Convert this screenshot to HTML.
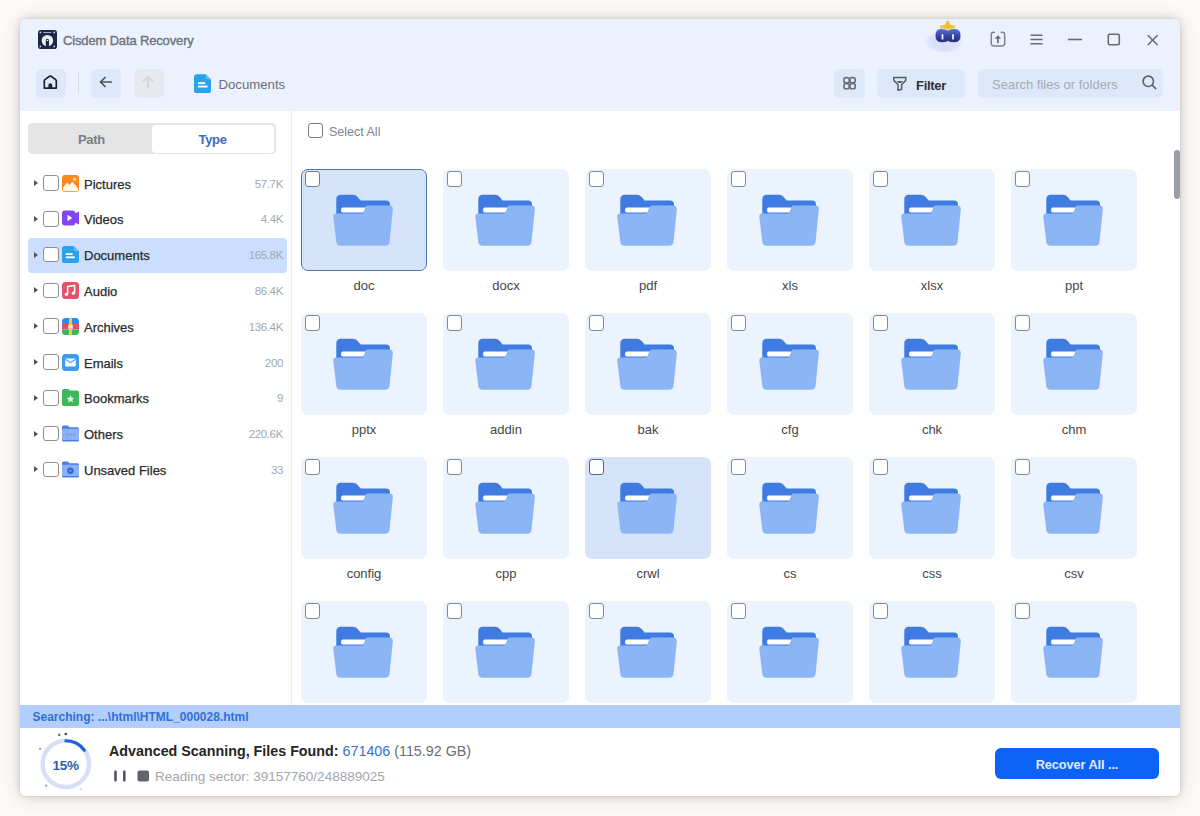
<!DOCTYPE html>
<html><head><meta charset="utf-8">
<style>
*{box-sizing:border-box;margin:0;padding:0}
html,body{width:1200px;height:816px;overflow:hidden;background:#fdfaf8;font-family:"Liberation Sans",sans-serif}
.abs{position:absolute}
.win{position:absolute;left:20px;top:19px;width:1160px;height:777px;border-radius:5px;background:#fff;
  box-shadow:0 0 2px rgba(0,0,0,0.16),0 0 8px rgba(40,30,25,0.12),0 1px 20px rgba(40,30,25,0.16);overflow:hidden}
.hdr{position:absolute;left:20px;top:19px;width:1160px;height:92px;background:#ebf2fe;border-radius:5px 5px 0 0}
.title{position:absolute;left:63px;top:32.8px;font-size:13px;color:#6b717b;-webkit-text-stroke:0.35px #6b717b;letter-spacing:-0.15px;white-space:nowrap}
.tbtn{position:absolute;top:68.5px;width:30px;height:29px;border-radius:5px;background:#dde8fb}
.divl{position:absolute;left:291px;top:111px;width:1px;height:594px;background:#ececec}
.tabs{position:absolute;left:28px;top:123px;width:248px;height:31px;border-radius:4.5px;background:#e5e5e5}
.tabw{position:absolute;left:152px;top:124.5px;width:122px;height:28px;border-radius:4px;background:#fff}
.tabt{position:absolute;top:132px;font-size:13px;letter-spacing:-0.3px;font-weight:bold;white-space:nowrap}
.srow{position:absolute;left:28px;width:259px;height:35px;border-radius:4px}
.srow.sel{background:#cbdefd}
.tri{position:absolute;left:5.7px;top:13.6px;width:0;height:0;border-left:4.5px solid #555;border-top:3px solid transparent;border-bottom:3px solid transparent}
.scb{position:absolute;left:15.3px;top:8.7px;width:15.6px;height:15.6px;border:1.5px solid #8e8e8e;border-radius:3px;background:#fff}
.sic{position:absolute;left:34px;top:8.2px;width:17px;height:17px}
.sic svg{display:block}
.sname{position:absolute;left:56px;top:10px;font-size:13px;color:#2a2a2a;-webkit-text-stroke:0.25px #2a2a2a;white-space:nowrap}
.scnt{position:absolute;right:4px;top:11px;font-size:11.5px;letter-spacing:-0.35px;color:#a3a8b0;white-space:nowrap}
.selall{position:absolute;left:308px;top:123px;width:15px;height:15px;border:1.5px solid #7c7c7c;border-radius:3px}
.selallt{position:absolute;left:329px;top:125px;font-size:12.5px;color:#7f838b;white-space:nowrap}
.card{position:absolute;width:126px;height:102px;border-radius:7px;background:#ebf3fe}
.card.sel{background:#d5e4fb;border:1px solid #4d78b6}
.card.hov{background:#d5e4fb}
.card .cb{position:absolute;left:3.5px;top:2.2px;width:15.7px;height:15.7px;border:1.5px solid #85888e;border-radius:3px;background:#fff}
.card.sel .cb{left:2.5px;top:1.2px;border-color:#6f7f98}
.card.hov .cb{border-color:#55688a}
.card .fi{position:absolute;left:32px;top:25px}
.card.sel .fi{left:31px;top:24px}
.lab{position:absolute;width:126px;text-align:center;font-size:13px;color:#454545;padding-top:1px;white-space:nowrap}
.sbar{position:absolute;left:20px;top:705px;width:1160px;height:23px;background:#b2cefc}
.sbart{position:absolute;left:32.5px;top:709.8px;font-size:12px;font-weight:bold;color:#3171d6;white-space:nowrap}
.scroll{position:absolute;left:1174px;top:150px;width:6px;height:49px;border-radius:3px;background:#9a9ea6}
.btn{position:absolute;left:995px;top:748px;width:164px;height:31px;border-radius:6px;background:#0a63f5;color:#e3ecff;font-size:12.8px;letter-spacing:-0.1px;font-weight:bold;text-align:center;line-height:33px}
.info1{position:absolute;left:109px;top:742.5px;font-size:14.3px;font-weight:bold;color:#252525;white-space:nowrap}
.info2{position:absolute;left:155px;top:768.5px;font-size:13.5px;color:#a2a6ad;white-space:nowrap}
</style></head><body>
<div class="win"></div>
<div class="hdr"></div>

<!-- logo -->
<svg class="abs" style="left:38px;top:30px" width="19" height="19" viewBox="0 0 19 19">
<rect x="0" y="0" width="19" height="19" rx="2.8" fill="#1e2846"/>
<circle cx="2.4" cy="2.5" r="0.9" fill="#c8cfdf"/><circle cx="16.2" cy="2.5" r="0.9" fill="#c8cfdf"/>
<circle cx="2.4" cy="16.4" r="0.9" fill="#c8cfdf"/><circle cx="16.2" cy="16.4" r="0.9" fill="#c8cfdf"/>
<rect x="5.3" y="2" width="8" height="0.9" fill="#b9c1d4"/>
<circle cx="9.4" cy="10.6" r="5.7" fill="#e9edf4"/>
<path d="M7.8 19V10.4A1.6 1.6 0 0 1 11 10.4V19Z" fill="#1e2846"/>
<circle cx="9.4" cy="10.5" r="0.75" fill="#eef1f6"/>
</svg>
<div class="title">Cisdem Data Recovery</div>

<!-- title bar right -->
<svg class="abs" style="left:924px;top:19px" width="48" height="36" viewBox="0 0 48 36">
<defs><radialGradient id="gl" cx="0.45" cy="0.55" r="0.5"><stop offset="0" stop-color="#d3dbfa"/><stop offset="0.7" stop-color="#dde3fb"/><stop offset="1" stop-color="#eef3fd"/></radialGradient>
<linearGradient id="bd" x1="0" y1="0" x2="0" y2="1"><stop offset="0" stop-color="#6076d4"/><stop offset="0.45" stop-color="#3c4aa8"/><stop offset="1" stop-color="#242a78"/></linearGradient></defs>
<ellipse cx="22" cy="22" rx="21" ry="12" fill="url(#gl)"/>
<path d="M23.6 2.6L25.6 6.8L30.2 7.6L26.9 10.9L27.7 15.5L23.6 13.3L19.5 15.5L20.3 10.9L17 7.6L21.6 6.8Z" fill="#f6c030" stroke="#f6c030" stroke-width="2.2" stroke-linejoin="round"/>
<path d="M11 16.5Q11 9.5 17.5 9.5Q21 9.5 23.8 11.2Q26.6 9.5 30.2 9.5Q37 9.5 37 16.5Q37 23.8 30 23.8Q26.5 23.8 23.8 22.5Q21.1 23.8 18 23.8Q11 23.8 11 16.5Z" fill="url(#bd)" stroke="#f3f5ff" stroke-width="0.8"/>
<rect x="17.6" y="15" width="1.8" height="5.6" rx="0.9" fill="#f3f4ff"/>
<rect x="28.1" y="15" width="1.8" height="5.6" rx="0.9" fill="#f3f4ff"/>
<path d="M17 30.5H30" stroke="#cfd6ee" stroke-width="1.2" stroke-dasharray="1.5 1"/>
</svg>
<svg class="abs" style="left:990px;top:31px" width="16" height="16" viewBox="0 0 16 16">
<path d="M4.4 1.3H3.6Q1.3 1.3 1.3 3.6V12.6Q1.3 14.9 3.6 14.9H12.4Q14.7 14.9 14.7 12.6V3.6Q14.7 1.3 12.4 1.3H11.2" stroke="#7e838b" stroke-width="1.5" fill="none" stroke-linecap="round"/>
<path d="M7.9 11.4V6.2" stroke="#686d75" stroke-width="1.7" stroke-linecap="round"/>
<path d="M5.4 7.3L7.9 4.7L10.4 7.3Z" fill="#686d75" stroke="#686d75" stroke-width="0.8" stroke-linejoin="round"/>
</svg>
<svg class="abs" style="left:1030px;top:34px" width="13" height="11" viewBox="0 0 13 11">
<path d="M0.5 1.2H12.5M0.5 5.5H12.5M0.5 9.8H12.5" stroke="#676b72" stroke-width="1.6"/>
</svg>
<svg class="abs" style="left:1068px;top:38px" width="15" height="3" viewBox="0 0 15 3">
<path d="M0 1.5H14" stroke="#676b72" stroke-width="1.6"/>
</svg>
<svg class="abs" style="left:1107px;top:33px" width="14" height="13" viewBox="0 0 14 13">
<rect x="1.3" y="1.3" width="11" height="10.5" rx="1.5" stroke="#676b72" stroke-width="1.6" fill="none"/>
</svg>
<svg class="abs" style="left:1146px;top:34px" width="13" height="12" viewBox="0 0 13 12">
<path d="M1.8 1.2L11.6 11M11.6 1.2L1.8 11" stroke="#676b72" stroke-width="1.6"/>
</svg>

<!-- toolbar -->
<div class="tbtn" style="left:36px"></div>
<svg class="abs" style="left:42px;top:74px" width="16" height="16" viewBox="0 0 16 16">
<path d="M2.3 14.1V6.7Q2.3 6 2.9 5.6L7.5 2.3Q8.3 1.7 9.1 2.3L13.7 5.6Q14.3 6 14.3 6.7V14.1Z" stroke="#1f2329" stroke-width="1.7" fill="none" stroke-linejoin="round"/>
<path d="M6.4 14.5V11.2Q6.4 9.3 8.3 9.3Q10.2 9.3 10.2 11.2V14.5Z" fill="#1f2329"/>
</svg>
<div class="abs" style="left:78px;top:72px;width:1px;height:22px;background:#d8dde6"></div>
<div class="tbtn" style="left:91px"></div>
<svg class="abs" style="left:98px;top:74px" width="16" height="16" viewBox="0 0 16 16">
<path d="M14 8H2.5M7.5 3L2.5 8L7.5 13" stroke="#4e535a" stroke-width="1.6" fill="none"/>
</svg>
<div class="tbtn" style="left:134px;background:#e6e9ef"></div>
<svg class="abs" style="left:140px;top:74px" width="16" height="16" viewBox="0 0 16 16">
<path d="M8 14V2.5M3 7.5L8 2.5L13 7.5" stroke="#cfd3da" stroke-width="1.5" fill="none"/>
</svg>
<svg class="abs" style="left:193.5px;top:73.5px" width="17" height="19" viewBox="0 0 17 19">
<path d="M0 2.8Q0 0.2 2.6 0.2H11.8L17 5.4V16.4Q17 19 14.4 19H2.6Q0 19 0 16.4Z" fill="#2ba2ee"/>
<path d="M11.8 0.2L17 5.4H14Q11.8 5.4 11.8 3.2Z" fill="#62bdf5"/>
<rect x="4" y="8.2" width="7.2" height="1.9" fill="#fff"/>
<rect x="4" y="11.6" width="9.5" height="1.9" fill="#fff"/>
</svg>
<div class="abs" style="left:218.5px;top:77px;font-size:13.2px;color:#6a6f77;white-space:nowrap">Documents</div>

<div class="tbtn" style="left:834px;width:31px"></div>
<svg class="abs" style="left:842px;top:75.5px" width="15" height="15" viewBox="0 0 15 15">
<rect x="2" y="1.6" width="5.2" height="5.2" rx="1.9" stroke="#6a6f77" stroke-width="1.6" fill="none"/>
<rect x="8" y="1.6" width="5.2" height="5.2" rx="1.9" stroke="#6a6f77" stroke-width="1.6" fill="none"/>
<rect x="2" y="7.6" width="5.2" height="5.2" rx="1.9" stroke="#6a6f77" stroke-width="1.6" fill="none"/>
<rect x="8" y="7.6" width="5.2" height="5.2" rx="1.9" stroke="#6a6f77" stroke-width="1.6" fill="none"/>
</svg>
<div class="tbtn" style="left:877px;width:88px"></div>
<svg class="abs" style="left:892px;top:76px" width="16" height="15" viewBox="0 0 16 15">
<path d="M1.8 1.6H13.8V3.4Q13.8 4.6 12.9 5.4L9.6 8.5V13.2L6 14.3V8.5L2.7 5.4Q1.8 4.6 1.8 3.4Z" stroke="#565b63" stroke-width="1.5" fill="none" stroke-linejoin="round"/>
<path d="M4.6 5H11L9 6.9H6.6Z" fill="#565b63"/>
</svg>
<div class="abs" style="left:916px;top:77.5px;font-size:13px;letter-spacing:-0.3px;font-weight:bold;color:#2c3037;white-space:nowrap">Filter</div>
<div class="tbtn" style="left:978px;width:185px"></div>
<div class="abs" style="left:992px;top:77px;font-size:13px;color:#a5aab2;white-space:nowrap">Search files or folders</div>
<svg class="abs" style="left:1142px;top:75px" width="15" height="15" viewBox="0 0 15 15">
<circle cx="6.3" cy="6.3" r="5.2" stroke="#5d626a" stroke-width="1.6" fill="none"/>
<path d="M10.2 10.2L14 14" stroke="#5d626a" stroke-width="1.7"/>
</svg>

<!-- left panel -->
<div class="divl"></div>
<div class="tabs"></div><div class="tabw"></div>
<div class="tabt" style="left:78px;color:#7b7f86">Path</div>
<div class="tabt" style="left:198.5px;color:#4169c0">Type</div>
<div class="srow" style="top:166.5px"><div class="tri"></div><div class="scb"></div><div class="sic"><svg width="17" height="17" viewBox="0 0 17 17"><rect x="0" y="0" width="17" height="17" rx="3" fill="#f8891b"/><circle cx="12.6" cy="4.2" r="1.6" fill="#ffd9a8"/><path d="M1 16.2V12.6L5.2 7.4L7.6 10L10.3 6.6L16 13.2V16.2Z" fill="#fff6e8"/></svg></div><div class="sname">Pictures</div><div class="scnt">57.7K</div></div><div class="srow" style="top:202.3px"><div class="tri"></div><div class="scb"></div><div class="sic"><svg width="17" height="16" viewBox="0 0 17 16"><path d="M0 3.5Q0 0.5 3 0.5H10.5Q13.2 0.5 13.4 3.2L17 1.5V14.5L13.4 12.8Q13.2 15.5 10.5 15.5H3Q0 15.5 0 12.5Z" fill="#8245f3"/><path d="M5.5 4.8L10.3 8L5.5 11.2Z" fill="#fff"/></svg></div><div class="sname">Videos</div><div class="scnt">4.4K</div></div><div class="srow sel" style="top:238.1px"><div class="tri"></div><div class="scb"></div><div class="sic"><svg width="17" height="17" viewBox="0 0 17 17"><path d="M0 2.6Q0 0 2.6 0H11.6L17 5.2V14.4Q17 17 14.4 17H2.6Q0 17 0 14.4Z" fill="#2ba2ee"/><path d="M11.6 0L17 5.2H14Q11.6 5.2 11.6 2.8Z" fill="#62bdf5"/><rect x="3.8" y="7.2" width="6.8" height="1.8" fill="#fff"/><rect x="3.8" y="10.4" width="9" height="1.8" fill="#fff"/></svg></div><div class="sname">Documents</div><div class="scnt">165.8K</div></div><div class="srow" style="top:273.9px"><div class="tri"></div><div class="scb"></div><div class="sic"><svg width="17" height="17" viewBox="0 0 17 17"><rect width="17" height="17" rx="3.5" fill="#e9506b"/><path d="M5.6 12.2V4.6L12.6 3.4V11" stroke="#fff" stroke-width="1.5" fill="none"/><circle cx="4.4" cy="12.3" r="1.6" fill="#fff"/><circle cx="11.4" cy="11.2" r="1.6" fill="#fff"/></svg></div><div class="sname">Audio</div><div class="scnt">86.4K</div></div><div class="srow" style="top:309.7px"><div class="tri"></div><div class="scb"></div><div class="sic"><svg width="17" height="17" viewBox="0 0 17 17"><defs><clipPath id="ca"><rect width="17" height="17" rx="3.5"/></clipPath></defs><g clip-path="url(#ca)"><rect width="17" height="6" fill="#2b8cf0"/><rect y="6" width="17" height="5.5" fill="#e84c6d"/><rect y="11.5" width="17" height="5.5" fill="#3ab85c"/><rect x="7" width="3" height="17" fill="#f4c94a"/><rect x="6.2" y="6.8" width="4.6" height="4" fill="#fde9b0"/></g></svg></div><div class="sname">Archives</div><div class="scnt">136.4K</div></div><div class="srow" style="top:345.5px"><div class="tri"></div><div class="scb"></div><div class="sic"><svg width="17" height="17" viewBox="0 0 17 17"><rect width="17" height="17" rx="3.5" fill="#3a9df0"/><rect x="3.2" y="4.6" width="10.6" height="8" rx="1" fill="#fff"/><path d="M3.4 5.2L8.5 8.6L13.6 5.2" stroke="#3a9df0" stroke-width="1.1" fill="none"/></svg></div><div class="sname">Emails</div><div class="scnt">200</div></div><div class="srow" style="top:381.3px"><div class="tri"></div><div class="scb"></div><div class="sic"><svg width="17" height="17" viewBox="0 0 17 17"><path d="M0 2Q0 0 2 0H6.2L8 1.6H15Q17 1.6 17 3.6V15Q17 17 15 17H2Q0 17 0 15Z" fill="#3db95b"/><path d="M8.5 6.2L9.7 8.7L12.3 9L10.3 10.8L10.9 13.5L8.5 12.1L6.1 13.5L6.7 10.8L4.7 9L7.3 8.7Z" fill="#e8f8ea"/></svg></div><div class="sname">Bookmarks</div><div class="scnt">9</div></div><div class="srow" style="top:417.1px"><div class="tri"></div><div class="scb"></div><div class="sic"><svg width="17" height="17" viewBox="0 0 17 17"><path d="M0 2Q0 0.5 1.6 0.5H5.8L7.6 2.2H15.4Q17 2.2 17 3.8V15Q17 16.6 15.4 16.6H1.6Q0 16.6 0 15Z" fill="#4a7fe3"/><rect x="0" y="3.8" width="17" height="11.2" rx="1" fill="#8bb0f4"/><circle cx="5" cy="9.6" r="0.9" fill="#5a8be6"/><circle cx="8.5" cy="9.6" r="0.9" fill="#5a8be6"/><circle cx="12" cy="9.6" r="0.9" fill="#5a8be6"/></svg></div><div class="sname">Others</div><div class="scnt">220.6K</div></div><div class="srow" style="top:452.9px"><div class="tri"></div><div class="scb"></div><div class="sic"><svg width="17" height="17" viewBox="0 0 17 17"><path d="M0 2Q0 0.5 1.6 0.5H5.8L7.6 2.2H15.4Q17 2.2 17 3.8V15Q17 16.6 15.4 16.6H1.6Q0 16.6 0 15Z" fill="#4a7fe3"/><rect x="0" y="3.8" width="17" height="11.2" rx="1" fill="#8bb0f4"/><circle cx="8.4" cy="9.8" r="3.3" fill="#2d6be0"/><circle cx="8.4" cy="9.8" r="1" fill="#7aa6f2"/></svg></div><div class="sname">Unsaved Files</div><div class="scnt">33</div></div>

<!-- content -->
<div class="selall"></div><div class="selallt">Select All</div>
<div class="card sel" style="left:301px;top:169px"><div class="cb"></div><svg class="fi" width="62" height="54" viewBox="0 0 62 54"><path d="M3.3 5.3Q3.3 0.7 8 0.7H20Q22.6 0.7 24.2 2.6L27.6 6.6H53Q57 6.6 57 10.5V30H3.3Z" fill="#3f7be1"/><path d="M9.5 13.6H33Q33.5 13.6 33 14.5L31.2 18.6H9.5Q8 18.6 8 16.1Q8 13.6 9.5 13.6Z" fill="#ffffff"/><path d="M0.3 22.7Q0.1 19.4 3.3 19.4H29.8L32.6 13Q33.1 11.6 34.8 11.6H56.3Q60.1 11.6 59.8 15.4L56.6 47.6Q56.2 51.8 52.3 51.8H7.6Q3.6 51.8 3.3 47.8Z" fill="#8cb5f5"/></svg></div><div class="lab" style="left:301px;top:277px">doc</div><div class="card " style="left:443px;top:169px"><div class="cb"></div><svg class="fi" width="62" height="54" viewBox="0 0 62 54"><path d="M3.3 5.3Q3.3 0.7 8 0.7H20Q22.6 0.7 24.2 2.6L27.6 6.6H53Q57 6.6 57 10.5V30H3.3Z" fill="#3f7be1"/><path d="M9.5 13.6H33Q33.5 13.6 33 14.5L31.2 18.6H9.5Q8 18.6 8 16.1Q8 13.6 9.5 13.6Z" fill="#ffffff"/><path d="M0.3 22.7Q0.1 19.4 3.3 19.4H29.8L32.6 13Q33.1 11.6 34.8 11.6H56.3Q60.1 11.6 59.8 15.4L56.6 47.6Q56.2 51.8 52.3 51.8H7.6Q3.6 51.8 3.3 47.8Z" fill="#8cb5f5"/></svg></div><div class="lab" style="left:443px;top:277px">docx</div><div class="card " style="left:585px;top:169px"><div class="cb"></div><svg class="fi" width="62" height="54" viewBox="0 0 62 54"><path d="M3.3 5.3Q3.3 0.7 8 0.7H20Q22.6 0.7 24.2 2.6L27.6 6.6H53Q57 6.6 57 10.5V30H3.3Z" fill="#3f7be1"/><path d="M9.5 13.6H33Q33.5 13.6 33 14.5L31.2 18.6H9.5Q8 18.6 8 16.1Q8 13.6 9.5 13.6Z" fill="#ffffff"/><path d="M0.3 22.7Q0.1 19.4 3.3 19.4H29.8L32.6 13Q33.1 11.6 34.8 11.6H56.3Q60.1 11.6 59.8 15.4L56.6 47.6Q56.2 51.8 52.3 51.8H7.6Q3.6 51.8 3.3 47.8Z" fill="#8cb5f5"/></svg></div><div class="lab" style="left:585px;top:277px">pdf</div><div class="card " style="left:727px;top:169px"><div class="cb"></div><svg class="fi" width="62" height="54" viewBox="0 0 62 54"><path d="M3.3 5.3Q3.3 0.7 8 0.7H20Q22.6 0.7 24.2 2.6L27.6 6.6H53Q57 6.6 57 10.5V30H3.3Z" fill="#3f7be1"/><path d="M9.5 13.6H33Q33.5 13.6 33 14.5L31.2 18.6H9.5Q8 18.6 8 16.1Q8 13.6 9.5 13.6Z" fill="#ffffff"/><path d="M0.3 22.7Q0.1 19.4 3.3 19.4H29.8L32.6 13Q33.1 11.6 34.8 11.6H56.3Q60.1 11.6 59.8 15.4L56.6 47.6Q56.2 51.8 52.3 51.8H7.6Q3.6 51.8 3.3 47.8Z" fill="#8cb5f5"/></svg></div><div class="lab" style="left:727px;top:277px">xls</div><div class="card " style="left:869px;top:169px"><div class="cb"></div><svg class="fi" width="62" height="54" viewBox="0 0 62 54"><path d="M3.3 5.3Q3.3 0.7 8 0.7H20Q22.6 0.7 24.2 2.6L27.6 6.6H53Q57 6.6 57 10.5V30H3.3Z" fill="#3f7be1"/><path d="M9.5 13.6H33Q33.5 13.6 33 14.5L31.2 18.6H9.5Q8 18.6 8 16.1Q8 13.6 9.5 13.6Z" fill="#ffffff"/><path d="M0.3 22.7Q0.1 19.4 3.3 19.4H29.8L32.6 13Q33.1 11.6 34.8 11.6H56.3Q60.1 11.6 59.8 15.4L56.6 47.6Q56.2 51.8 52.3 51.8H7.6Q3.6 51.8 3.3 47.8Z" fill="#8cb5f5"/></svg></div><div class="lab" style="left:869px;top:277px">xlsx</div><div class="card " style="left:1011px;top:169px"><div class="cb"></div><svg class="fi" width="62" height="54" viewBox="0 0 62 54"><path d="M3.3 5.3Q3.3 0.7 8 0.7H20Q22.6 0.7 24.2 2.6L27.6 6.6H53Q57 6.6 57 10.5V30H3.3Z" fill="#3f7be1"/><path d="M9.5 13.6H33Q33.5 13.6 33 14.5L31.2 18.6H9.5Q8 18.6 8 16.1Q8 13.6 9.5 13.6Z" fill="#ffffff"/><path d="M0.3 22.7Q0.1 19.4 3.3 19.4H29.8L32.6 13Q33.1 11.6 34.8 11.6H56.3Q60.1 11.6 59.8 15.4L56.6 47.6Q56.2 51.8 52.3 51.8H7.6Q3.6 51.8 3.3 47.8Z" fill="#8cb5f5"/></svg></div><div class="lab" style="left:1011px;top:277px">ppt</div><div class="card " style="left:301px;top:313px"><div class="cb"></div><svg class="fi" width="62" height="54" viewBox="0 0 62 54"><path d="M3.3 5.3Q3.3 0.7 8 0.7H20Q22.6 0.7 24.2 2.6L27.6 6.6H53Q57 6.6 57 10.5V30H3.3Z" fill="#3f7be1"/><path d="M9.5 13.6H33Q33.5 13.6 33 14.5L31.2 18.6H9.5Q8 18.6 8 16.1Q8 13.6 9.5 13.6Z" fill="#ffffff"/><path d="M0.3 22.7Q0.1 19.4 3.3 19.4H29.8L32.6 13Q33.1 11.6 34.8 11.6H56.3Q60.1 11.6 59.8 15.4L56.6 47.6Q56.2 51.8 52.3 51.8H7.6Q3.6 51.8 3.3 47.8Z" fill="#8cb5f5"/></svg></div><div class="lab" style="left:301px;top:421px">pptx</div><div class="card " style="left:443px;top:313px"><div class="cb"></div><svg class="fi" width="62" height="54" viewBox="0 0 62 54"><path d="M3.3 5.3Q3.3 0.7 8 0.7H20Q22.6 0.7 24.2 2.6L27.6 6.6H53Q57 6.6 57 10.5V30H3.3Z" fill="#3f7be1"/><path d="M9.5 13.6H33Q33.5 13.6 33 14.5L31.2 18.6H9.5Q8 18.6 8 16.1Q8 13.6 9.5 13.6Z" fill="#ffffff"/><path d="M0.3 22.7Q0.1 19.4 3.3 19.4H29.8L32.6 13Q33.1 11.6 34.8 11.6H56.3Q60.1 11.6 59.8 15.4L56.6 47.6Q56.2 51.8 52.3 51.8H7.6Q3.6 51.8 3.3 47.8Z" fill="#8cb5f5"/></svg></div><div class="lab" style="left:443px;top:421px">addin</div><div class="card " style="left:585px;top:313px"><div class="cb"></div><svg class="fi" width="62" height="54" viewBox="0 0 62 54"><path d="M3.3 5.3Q3.3 0.7 8 0.7H20Q22.6 0.7 24.2 2.6L27.6 6.6H53Q57 6.6 57 10.5V30H3.3Z" fill="#3f7be1"/><path d="M9.5 13.6H33Q33.5 13.6 33 14.5L31.2 18.6H9.5Q8 18.6 8 16.1Q8 13.6 9.5 13.6Z" fill="#ffffff"/><path d="M0.3 22.7Q0.1 19.4 3.3 19.4H29.8L32.6 13Q33.1 11.6 34.8 11.6H56.3Q60.1 11.6 59.8 15.4L56.6 47.6Q56.2 51.8 52.3 51.8H7.6Q3.6 51.8 3.3 47.8Z" fill="#8cb5f5"/></svg></div><div class="lab" style="left:585px;top:421px">bak</div><div class="card " style="left:727px;top:313px"><div class="cb"></div><svg class="fi" width="62" height="54" viewBox="0 0 62 54"><path d="M3.3 5.3Q3.3 0.7 8 0.7H20Q22.6 0.7 24.2 2.6L27.6 6.6H53Q57 6.6 57 10.5V30H3.3Z" fill="#3f7be1"/><path d="M9.5 13.6H33Q33.5 13.6 33 14.5L31.2 18.6H9.5Q8 18.6 8 16.1Q8 13.6 9.5 13.6Z" fill="#ffffff"/><path d="M0.3 22.7Q0.1 19.4 3.3 19.4H29.8L32.6 13Q33.1 11.6 34.8 11.6H56.3Q60.1 11.6 59.8 15.4L56.6 47.6Q56.2 51.8 52.3 51.8H7.6Q3.6 51.8 3.3 47.8Z" fill="#8cb5f5"/></svg></div><div class="lab" style="left:727px;top:421px">cfg</div><div class="card " style="left:869px;top:313px"><div class="cb"></div><svg class="fi" width="62" height="54" viewBox="0 0 62 54"><path d="M3.3 5.3Q3.3 0.7 8 0.7H20Q22.6 0.7 24.2 2.6L27.6 6.6H53Q57 6.6 57 10.5V30H3.3Z" fill="#3f7be1"/><path d="M9.5 13.6H33Q33.5 13.6 33 14.5L31.2 18.6H9.5Q8 18.6 8 16.1Q8 13.6 9.5 13.6Z" fill="#ffffff"/><path d="M0.3 22.7Q0.1 19.4 3.3 19.4H29.8L32.6 13Q33.1 11.6 34.8 11.6H56.3Q60.1 11.6 59.8 15.4L56.6 47.6Q56.2 51.8 52.3 51.8H7.6Q3.6 51.8 3.3 47.8Z" fill="#8cb5f5"/></svg></div><div class="lab" style="left:869px;top:421px">chk</div><div class="card " style="left:1011px;top:313px"><div class="cb"></div><svg class="fi" width="62" height="54" viewBox="0 0 62 54"><path d="M3.3 5.3Q3.3 0.7 8 0.7H20Q22.6 0.7 24.2 2.6L27.6 6.6H53Q57 6.6 57 10.5V30H3.3Z" fill="#3f7be1"/><path d="M9.5 13.6H33Q33.5 13.6 33 14.5L31.2 18.6H9.5Q8 18.6 8 16.1Q8 13.6 9.5 13.6Z" fill="#ffffff"/><path d="M0.3 22.7Q0.1 19.4 3.3 19.4H29.8L32.6 13Q33.1 11.6 34.8 11.6H56.3Q60.1 11.6 59.8 15.4L56.6 47.6Q56.2 51.8 52.3 51.8H7.6Q3.6 51.8 3.3 47.8Z" fill="#8cb5f5"/></svg></div><div class="lab" style="left:1011px;top:421px">chm</div><div class="card " style="left:301px;top:457px"><div class="cb"></div><svg class="fi" width="62" height="54" viewBox="0 0 62 54"><path d="M3.3 5.3Q3.3 0.7 8 0.7H20Q22.6 0.7 24.2 2.6L27.6 6.6H53Q57 6.6 57 10.5V30H3.3Z" fill="#3f7be1"/><path d="M9.5 13.6H33Q33.5 13.6 33 14.5L31.2 18.6H9.5Q8 18.6 8 16.1Q8 13.6 9.5 13.6Z" fill="#ffffff"/><path d="M0.3 22.7Q0.1 19.4 3.3 19.4H29.8L32.6 13Q33.1 11.6 34.8 11.6H56.3Q60.1 11.6 59.8 15.4L56.6 47.6Q56.2 51.8 52.3 51.8H7.6Q3.6 51.8 3.3 47.8Z" fill="#8cb5f5"/></svg></div><div class="lab" style="left:301px;top:565px">config</div><div class="card " style="left:443px;top:457px"><div class="cb"></div><svg class="fi" width="62" height="54" viewBox="0 0 62 54"><path d="M3.3 5.3Q3.3 0.7 8 0.7H20Q22.6 0.7 24.2 2.6L27.6 6.6H53Q57 6.6 57 10.5V30H3.3Z" fill="#3f7be1"/><path d="M9.5 13.6H33Q33.5 13.6 33 14.5L31.2 18.6H9.5Q8 18.6 8 16.1Q8 13.6 9.5 13.6Z" fill="#ffffff"/><path d="M0.3 22.7Q0.1 19.4 3.3 19.4H29.8L32.6 13Q33.1 11.6 34.8 11.6H56.3Q60.1 11.6 59.8 15.4L56.6 47.6Q56.2 51.8 52.3 51.8H7.6Q3.6 51.8 3.3 47.8Z" fill="#8cb5f5"/></svg></div><div class="lab" style="left:443px;top:565px">cpp</div><div class="card hov" style="left:585px;top:457px"><div class="cb"></div><svg class="fi" width="62" height="54" viewBox="0 0 62 54"><path d="M3.3 5.3Q3.3 0.7 8 0.7H20Q22.6 0.7 24.2 2.6L27.6 6.6H53Q57 6.6 57 10.5V30H3.3Z" fill="#3f7be1"/><path d="M9.5 13.6H33Q33.5 13.6 33 14.5L31.2 18.6H9.5Q8 18.6 8 16.1Q8 13.6 9.5 13.6Z" fill="#ffffff"/><path d="M0.3 22.7Q0.1 19.4 3.3 19.4H29.8L32.6 13Q33.1 11.6 34.8 11.6H56.3Q60.1 11.6 59.8 15.4L56.6 47.6Q56.2 51.8 52.3 51.8H7.6Q3.6 51.8 3.3 47.8Z" fill="#8cb5f5"/></svg></div><div class="lab" style="left:585px;top:565px">crwl</div><div class="card " style="left:727px;top:457px"><div class="cb"></div><svg class="fi" width="62" height="54" viewBox="0 0 62 54"><path d="M3.3 5.3Q3.3 0.7 8 0.7H20Q22.6 0.7 24.2 2.6L27.6 6.6H53Q57 6.6 57 10.5V30H3.3Z" fill="#3f7be1"/><path d="M9.5 13.6H33Q33.5 13.6 33 14.5L31.2 18.6H9.5Q8 18.6 8 16.1Q8 13.6 9.5 13.6Z" fill="#ffffff"/><path d="M0.3 22.7Q0.1 19.4 3.3 19.4H29.8L32.6 13Q33.1 11.6 34.8 11.6H56.3Q60.1 11.6 59.8 15.4L56.6 47.6Q56.2 51.8 52.3 51.8H7.6Q3.6 51.8 3.3 47.8Z" fill="#8cb5f5"/></svg></div><div class="lab" style="left:727px;top:565px">cs</div><div class="card " style="left:869px;top:457px"><div class="cb"></div><svg class="fi" width="62" height="54" viewBox="0 0 62 54"><path d="M3.3 5.3Q3.3 0.7 8 0.7H20Q22.6 0.7 24.2 2.6L27.6 6.6H53Q57 6.6 57 10.5V30H3.3Z" fill="#3f7be1"/><path d="M9.5 13.6H33Q33.5 13.6 33 14.5L31.2 18.6H9.5Q8 18.6 8 16.1Q8 13.6 9.5 13.6Z" fill="#ffffff"/><path d="M0.3 22.7Q0.1 19.4 3.3 19.4H29.8L32.6 13Q33.1 11.6 34.8 11.6H56.3Q60.1 11.6 59.8 15.4L56.6 47.6Q56.2 51.8 52.3 51.8H7.6Q3.6 51.8 3.3 47.8Z" fill="#8cb5f5"/></svg></div><div class="lab" style="left:869px;top:565px">css</div><div class="card " style="left:1011px;top:457px"><div class="cb"></div><svg class="fi" width="62" height="54" viewBox="0 0 62 54"><path d="M3.3 5.3Q3.3 0.7 8 0.7H20Q22.6 0.7 24.2 2.6L27.6 6.6H53Q57 6.6 57 10.5V30H3.3Z" fill="#3f7be1"/><path d="M9.5 13.6H33Q33.5 13.6 33 14.5L31.2 18.6H9.5Q8 18.6 8 16.1Q8 13.6 9.5 13.6Z" fill="#ffffff"/><path d="M0.3 22.7Q0.1 19.4 3.3 19.4H29.8L32.6 13Q33.1 11.6 34.8 11.6H56.3Q60.1 11.6 59.8 15.4L56.6 47.6Q56.2 51.8 52.3 51.8H7.6Q3.6 51.8 3.3 47.8Z" fill="#8cb5f5"/></svg></div><div class="lab" style="left:1011px;top:565px">csv</div><div class="card " style="left:301px;top:601px"><div class="cb"></div><svg class="fi" width="62" height="54" viewBox="0 0 62 54"><path d="M3.3 5.3Q3.3 0.7 8 0.7H20Q22.6 0.7 24.2 2.6L27.6 6.6H53Q57 6.6 57 10.5V30H3.3Z" fill="#3f7be1"/><path d="M9.5 13.6H33Q33.5 13.6 33 14.5L31.2 18.6H9.5Q8 18.6 8 16.1Q8 13.6 9.5 13.6Z" fill="#ffffff"/><path d="M0.3 22.7Q0.1 19.4 3.3 19.4H29.8L32.6 13Q33.1 11.6 34.8 11.6H56.3Q60.1 11.6 59.8 15.4L56.6 47.6Q56.2 51.8 52.3 51.8H7.6Q3.6 51.8 3.3 47.8Z" fill="#8cb5f5"/></svg></div><div class="card " style="left:443px;top:601px"><div class="cb"></div><svg class="fi" width="62" height="54" viewBox="0 0 62 54"><path d="M3.3 5.3Q3.3 0.7 8 0.7H20Q22.6 0.7 24.2 2.6L27.6 6.6H53Q57 6.6 57 10.5V30H3.3Z" fill="#3f7be1"/><path d="M9.5 13.6H33Q33.5 13.6 33 14.5L31.2 18.6H9.5Q8 18.6 8 16.1Q8 13.6 9.5 13.6Z" fill="#ffffff"/><path d="M0.3 22.7Q0.1 19.4 3.3 19.4H29.8L32.6 13Q33.1 11.6 34.8 11.6H56.3Q60.1 11.6 59.8 15.4L56.6 47.6Q56.2 51.8 52.3 51.8H7.6Q3.6 51.8 3.3 47.8Z" fill="#8cb5f5"/></svg></div><div class="card " style="left:585px;top:601px"><div class="cb"></div><svg class="fi" width="62" height="54" viewBox="0 0 62 54"><path d="M3.3 5.3Q3.3 0.7 8 0.7H20Q22.6 0.7 24.2 2.6L27.6 6.6H53Q57 6.6 57 10.5V30H3.3Z" fill="#3f7be1"/><path d="M9.5 13.6H33Q33.5 13.6 33 14.5L31.2 18.6H9.5Q8 18.6 8 16.1Q8 13.6 9.5 13.6Z" fill="#ffffff"/><path d="M0.3 22.7Q0.1 19.4 3.3 19.4H29.8L32.6 13Q33.1 11.6 34.8 11.6H56.3Q60.1 11.6 59.8 15.4L56.6 47.6Q56.2 51.8 52.3 51.8H7.6Q3.6 51.8 3.3 47.8Z" fill="#8cb5f5"/></svg></div><div class="card " style="left:727px;top:601px"><div class="cb"></div><svg class="fi" width="62" height="54" viewBox="0 0 62 54"><path d="M3.3 5.3Q3.3 0.7 8 0.7H20Q22.6 0.7 24.2 2.6L27.6 6.6H53Q57 6.6 57 10.5V30H3.3Z" fill="#3f7be1"/><path d="M9.5 13.6H33Q33.5 13.6 33 14.5L31.2 18.6H9.5Q8 18.6 8 16.1Q8 13.6 9.5 13.6Z" fill="#ffffff"/><path d="M0.3 22.7Q0.1 19.4 3.3 19.4H29.8L32.6 13Q33.1 11.6 34.8 11.6H56.3Q60.1 11.6 59.8 15.4L56.6 47.6Q56.2 51.8 52.3 51.8H7.6Q3.6 51.8 3.3 47.8Z" fill="#8cb5f5"/></svg></div><div class="card " style="left:869px;top:601px"><div class="cb"></div><svg class="fi" width="62" height="54" viewBox="0 0 62 54"><path d="M3.3 5.3Q3.3 0.7 8 0.7H20Q22.6 0.7 24.2 2.6L27.6 6.6H53Q57 6.6 57 10.5V30H3.3Z" fill="#3f7be1"/><path d="M9.5 13.6H33Q33.5 13.6 33 14.5L31.2 18.6H9.5Q8 18.6 8 16.1Q8 13.6 9.5 13.6Z" fill="#ffffff"/><path d="M0.3 22.7Q0.1 19.4 3.3 19.4H29.8L32.6 13Q33.1 11.6 34.8 11.6H56.3Q60.1 11.6 59.8 15.4L56.6 47.6Q56.2 51.8 52.3 51.8H7.6Q3.6 51.8 3.3 47.8Z" fill="#8cb5f5"/></svg></div><div class="card " style="left:1011px;top:601px"><div class="cb"></div><svg class="fi" width="62" height="54" viewBox="0 0 62 54"><path d="M3.3 5.3Q3.3 0.7 8 0.7H20Q22.6 0.7 24.2 2.6L27.6 6.6H53Q57 6.6 57 10.5V30H3.3Z" fill="#3f7be1"/><path d="M9.5 13.6H33Q33.5 13.6 33 14.5L31.2 18.6H9.5Q8 18.6 8 16.1Q8 13.6 9.5 13.6Z" fill="#ffffff"/><path d="M0.3 22.7Q0.1 19.4 3.3 19.4H29.8L32.6 13Q33.1 11.6 34.8 11.6H56.3Q60.1 11.6 59.8 15.4L56.6 47.6Q56.2 51.8 52.3 51.8H7.6Q3.6 51.8 3.3 47.8Z" fill="#8cb5f5"/></svg></div>
<div class="scroll"></div>

<!-- status -->
<div class="sbar"></div>
<div class="sbart">Searching: ...\html\HTML_000028.html</div>

<svg class="abs" style="left:33px;top:731px" width="66" height="66" viewBox="0 0 66 66">
<defs><filter id="bl" x="-20%" y="-20%" width="140%" height="140%"><feGaussianBlur stdDeviation="0.6"/></filter></defs>
<circle cx="32.8" cy="32.8" r="23.2" stroke="#d5dff7" stroke-width="4.4" fill="none" filter="url(#bl)"/>
<path d="M32.8 9.8A23 23 0 0 1 51.4 19.3" stroke="#1f5fd8" stroke-width="3" fill="none" stroke-linecap="round"/>
<circle cx="26.2" cy="3.9" r="1.3" fill="#6b7385"/><circle cx="32.8" cy="3" r="1.3" fill="#3b4560"/>
<circle cx="7.1" cy="17.8" r="1.2" fill="#9aa2b0"/><circle cx="13.1" cy="54.6" r="1.2" fill="#a3a9b3"/>
<circle cx="47.9" cy="58" r="1.1" fill="#d3d7de"/>
</svg>
<div class="abs" style="left:52.5px;top:757.5px;font-size:13.5px;font-weight:bold;letter-spacing:-0.3px;color:#2f5cae;white-space:nowrap">15%</div>

<div class="info1">Advanced Scanning, Files Found: <span style="color:#3570cf;font-weight:normal">671406</span> <span style="color:#6a6e75;font-weight:normal">(115.92 GB)</span></div>
<svg class="abs" style="left:113px;top:770px" width="38" height="12" viewBox="0 0 38 12">
<rect x="1.2" y="0.5" width="2.6" height="11" rx="1" fill="#50555c"/>
<rect x="10" y="0.5" width="2.6" height="11" rx="1" fill="#50555c"/>
<rect x="24.5" y="0.5" width="11.5" height="11" rx="2" fill="#5f646b"/>
</svg>
<div class="info2">Reading sector: 39157760/248889025</div>
<div class="btn">Recover All ...</div>
</body></html>
